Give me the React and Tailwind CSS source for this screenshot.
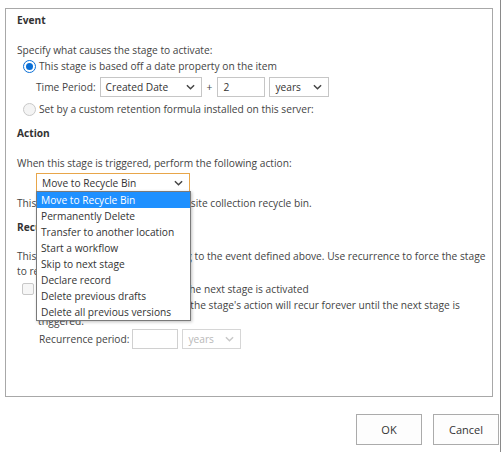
import React from 'react'

const Chevron = ({ className = '' }) => (
  <svg viewBox="0 0 10 6" className={className} fill="none">
    <path d="M1 1l4 4 4-4" stroke="currentColor" strokeWidth="1.6" />
  </svg>
)

const Select = ({ value, className = '', disabled = false }) => (
  <div
    className={`flex h-[20px] items-center justify-between border pl-[5px] pr-[6px] ${
      disabled ? 'border-[#d6d6d6] text-[#b8b8b8]' : 'border-[#c6c6c6] text-[#333]'
    } ${className}`}
  >
    <span>{value}</span>
    <Chevron className={`w-[9px] h-[6px] ${disabled ? 'text-[#c8c8c8]' : 'text-[#444]'}`} />
  </div>
)

const actions = [
  'Move to Recycle Bin',
  'Permanently Delete',
  'Transfer to another location',
  'Start a workflow',
  'Skip to next stage',
  'Declare record',
  'Delete previous drafts',
  'Delete all previous versions',
]

export default function App() {
  return (
    <div className="relative h-[452px] w-[501px] overflow-hidden border-r border-[#8a8a8a] bg-white font-['Open_Sans',sans-serif] text-[10.2px] leading-4 text-[#444]">
      <div className="relative ml-[5px] mt-[8px] flex h-[389px] w-[488px] flex-col border border-[#a8a8a8] pl-[11px] pr-[3px]">
        <div className="mt-[3px] font-bold text-[#333]">Event</div>
        <div className="mt-[14px]">Specify what causes the stage to activate:</div>
        <div className="flex items-center gap-[3px] pl-[6px]">
          <span className="flex h-[13px] w-[13px] items-center justify-center rounded-full border border-[#0a6fd6] bg-white">
            <span className="h-[7px] w-[7px] rounded-full bg-[#0a6fd6]" />
          </span>
          <span>This stage is based off a date property on the item</span>
        </div>
        <div className="mt-[3px] flex h-[20px] items-center pl-[19px]">
          <span className="mr-[4px]">Time Period:</span>
          <Select value="Created Date" className="w-[102px]" />
          <span className="mx-[5px]">+</span>
          <div className="flex h-[20px] w-[48px] items-center border border-[#c6c6c6] pl-[5px] text-[#333]">2</div>
          <Select value="years" className="ml-[4px] w-[60px]" />
        </div>
        <div className="mt-[4px] flex items-center gap-[3px] pl-[6px]">
          <span className="h-[13px] w-[13px] rounded-full border border-[#c8c8c8] bg-[#f4f4f4]" />
          <span>Set by a custom retention formula installed on this server:</span>
        </div>
        <div className="mt-[8px] font-bold text-[#333]">Action</div>
        <div className="mt-[14px]">When this stage is triggered, perform the following action:</div>
        <div className="mt-[2px] pl-[19px]">
          <div className="flex h-[19px] w-[154px] items-center justify-between border border-[#e8a64a] pl-[5px] pr-[6px] text-[#333]">
            <span>Move to Recycle Bin</span>
            <Chevron className="h-[6px] w-[9px] text-[#444]" />
          </div>
        </div>
        <div className="mt-[3px]">This action will move the item to the site collection recycle bin.</div>
        <div className="mt-[8px] font-bold text-[#333]">Recurrence</div>
        <div className="mt-[14px] leading-[15px]">
          This stage will be activated according to the event defined above. Use recurrence to force the stage to repeat its action.
        </div>
        <div className="mt-[2px] flex items-center gap-[5px] pl-[5px]">
          <span className="h-[12px] w-[12px] rounded-[2px] border border-[#c8c8c8] bg-[#f6f6f6]" />
          <span>Repeat this stage's action until the next stage is activated</span>
        </div>
        <div className="w-[451px] pl-[21px]">
          When this checkbox is selected, the stage's action will recur forever until the next stage is triggered.
        </div>
        <div className="flex h-[20px] items-center pl-[22px]">
          <span className="mr-[3px]">Recurrence period:</span>
          <div className="h-[20px] w-[46px] border border-[#d0d0d0]" />
          <Select value="years" disabled className="ml-[4px] w-[59px]" />
        </div>

        <div className="absolute left-[30px] top-[182px] w-[155px] border border-[#7a7a7a] bg-white shadow-[1px_1px_3px_rgba(0,0,0,0.25)]">
          {actions.map((a, i) => (
            <div
              key={a}
              className={`h-4 pl-[4px] ${i === 0 ? 'bg-[#1e90ff] text-white' : 'text-[#333]'}`}
            >
              {a}
            </div>
          ))}
        </div>
      </div>

      <div className="mt-[17px] flex justify-end gap-[11px] pr-[1px]">
        <button className="h-[31px] w-[66px] border border-[#ababab] bg-[#fdfdfd] text-[11px] text-[#333]">OK</button>
        <button className="h-[31px] w-[66px] border border-[#ababab] bg-[#fdfdfd] text-[11px] text-[#333]">Cancel</button>
      </div>
    </div>
  )
}
